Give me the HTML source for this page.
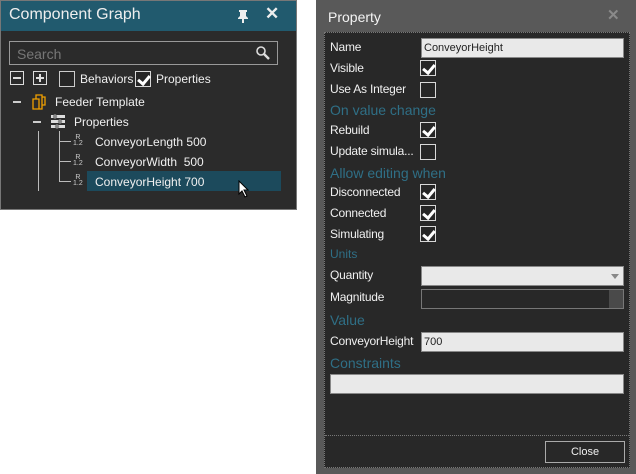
<!DOCTYPE html>
<html><head><meta charset="utf-8"><style>
*{box-sizing:border-box;margin:0;padding:0}
body{width:636px;height:474px;background:#fff;position:relative;overflow:hidden;font-family:"Liberation Sans",sans-serif;font-size:12px;color:#f0f0f0}
.a{position:absolute}
.cb{position:absolute;width:16px;height:16px;border:1px solid #d8d8d8;background:#262626}
.cb.on::after{content:"";position:absolute;left:4px;top:1px;width:5px;height:9px;border:solid #fff;border-width:0 3px 3px 0;transform:rotate(40deg)}
.lbl{position:absolute;left:330px;font-size:12px;color:#f0f0f0;letter-spacing:-0.2px}
.hd{position:absolute;left:330px;font-size:14px;color:#2f6f86}
.inp{position:absolute;background:#e9e9e9;border:1px solid #888;color:#222;font-size:11px;padding:3px 2px}
</style></head><body>
<div class="a" style="left:0;top:0;width:297px;height:210px;background:#2b2b2b;border:1px solid #777"></div>
<div class="a" style="left:1px;top:1px;width:295px;height:30px;background:#215a6e"></div>
<div class="a" style="left:9px;top:6px;font-size:16px;color:#eee">Component Graph</div>
<svg class="a" style="left:236px;top:9px" width="14" height="14"><path d="M3 1h8v2h-1v4l2 2v1H8v4H6v-4H2V9l2-2V3H3z" fill="#eee"/></svg>
<div class="a" style="left:265px;top:4px;font-size:17px;font-weight:bold;color:#eee">✕</div>
<div class="a" style="left:9px;top:41px;width:269px;height:24px;border:1px solid #999;background:#2b2b2b"></div>
<div class="a" style="left:17px;top:46px;font-size:14px;color:#777">Search</div>
<svg class="a" style="left:255px;top:45px" width="16" height="16"><circle cx="6" cy="6" r="4" stroke="#ddd" stroke-width="1.6" fill="none"/><path d="M9 9l5 5" stroke="#ddd" stroke-width="2.4"/></svg>
<div class="a" style="left:10px;top:71px;width:14px;height:14px;border:1px solid #ddd"></div><div class="a" style="left:13px;top:77px;width:8px;height:2px;background:#ddd"></div>
<div class="a" style="left:33px;top:71px;width:14px;height:14px;border:1px solid #ddd"></div><div class="a" style="left:36px;top:77px;width:8px;height:2px;background:#ddd"></div><div class="a" style="left:39px;top:74px;width:2px;height:8px;background:#ddd"></div>
<div class="cb" style="left:59px;top:71px;border-color:#ccc"></div>
<div class="a" style="left:80px;top:72px;font-size:12px">Behaviors</div>
<div class="cb on" style="left:135px;top:71px"></div>
<div class="a" style="left:156px;top:72px;font-size:12px">Properties</div>
<div class="a" style="left:13px;top:101px;width:8px;height:2px;background:#ccc"></div>
<svg class="a" style="left:32px;top:93px" width="14" height="17"><path d="M1 6h3V2h6v2h3v8h-3v4H1z M4 6h3v10 M10 4v8" stroke="#f0a000" stroke-width="1.3" fill="none"/></svg>
<div class="a" style="left:55px;top:95px">Feeder Template</div>
<div class="a" style="left:33px;top:121px;width:8px;height:2px;background:#ccc"></div>
<svg class="a" style="left:50px;top:113px" width="16" height="16"><rect x="1" y="2" width="14" height="3" fill="#ddd"/><rect x="1" y="7" width="14" height="3" fill="#ddd"/><rect x="1" y="12" width="14" height="3" fill="#ddd"/><circle cx="5" cy="3.5" r="2.2" fill="#888"/><circle cx="10" cy="8.5" r="2.2" fill="#888"/><circle cx="7" cy="13.5" r="2.2" fill="#888"/></svg>
<div class="a" style="left:74px;top:115px">Properties</div>
<div class="a" style="left:38px;top:131px;width:1px;height:60px;background:#bbb"></div>
<div class="a" style="left:59px;top:131px;width:1px;height:50px;background:#bbb"></div>
<div class="a" style="left:59px;top:141px;width:12px;height:1px;background:#bbb"></div>
<div class="a" style="left:59px;top:161px;width:12px;height:1px;background:#bbb"></div>
<div class="a" style="left:59px;top:181px;width:12px;height:1px;background:#bbb"></div>
<div class="a" style="left:87px;top:171px;width:194px;height:20px;background:#1c4a5c"></div>
<div class="a" style="left:73px;top:135px;font-size:7px;line-height:6px;color:#ccc;text-align:center">R<br>1.2</div>
<div class="a" style="left:73px;top:155px;font-size:7px;line-height:6px;color:#ccc;text-align:center">R<br>1.2</div>
<div class="a" style="left:73px;top:175px;font-size:7px;line-height:6px;color:#ccc;text-align:center">R<br>1.2</div>
<div class="a" style="left:95px;top:135px">ConveyorLength 500</div>
<div class="a" style="left:95px;top:155px">ConveyorWidth&nbsp; 500</div>
<div class="a" style="left:95px;top:175px">ConveyorHeight 700</div>
<svg class="a" style="left:238px;top:180px" width="12" height="18"><path d="M1 1v13l3-3 3 6 2-1-3-6h4z" fill="#fff" stroke="#000" stroke-width="1"/></svg>
<div class="a" style="left:316px;top:0;width:320px;height:474px;background:#595959"></div>
<div class="a" style="left:328px;top:9px;font-size:14px;color:#f4f4f4">Property</div>
<div class="a" style="left:607px;top:6px;font-size:15px;font-weight:bold;color:#8a8a8a">✕</div>
<div class="a" style="left:324px;top:32px;width:306px;height:436px;background:#282828;border:1px dotted #777"></div>
<div class="a" style="left:325px;top:435px;width:304px;height:1px;border-top:1px dotted #777"></div>
<div class="a" style="left:545px;top:441px;width:80px;height:22px;border:1px solid #aaa;text-align:center;line-height:20px;font-size:11px">Close</div>
<div class="lbl" style="top:40px">Name</div><div class="inp" style="left:421px;top:38px;width:203px;height:20px">ConveyorHeight</div>
<div class="lbl" style="top:61px">Visible</div><div class="cb on" style="left:420px;top:60px"></div>
<div class="lbl" style="top:82px">Use As Integer</div><div class="cb" style="left:420px;top:82px"></div>
<div class="hd" style="top:102px">On value change</div>
<div class="lbl" style="top:123px">Rebuild</div><div class="cb on" style="left:420px;top:122px"></div>
<div class="lbl" style="top:144px">Update simula...</div><div class="cb" style="left:420px;top:144px"></div>
<div class="hd" style="top:165px">Allow editing when</div>
<div class="lbl" style="top:185px">Disconnected</div><div class="cb on" style="left:420px;top:184px"></div>
<div class="lbl" style="top:206px">Connected</div><div class="cb on" style="left:420px;top:205px"></div>
<div class="lbl" style="top:227px">Simulating</div><div class="cb on" style="left:420px;top:226px"></div>
<div class="hd" style="top:247px;font-size:12px;color:#2f6f86">Units</div>
<div class="lbl" style="top:268px">Quantity</div><div class="inp" style="left:421px;top:266px;width:203px;height:20px"></div>
<div class="a" style="left:611px;top:274px;border:4px solid transparent;border-top:5px solid #888"></div>
<div class="lbl" style="top:290px">Magnitude</div><div class="a" style="left:421px;top:289px;width:203px;height:20px;border:1px solid #777;background:#282828"></div>
<div class="a" style="left:609px;top:290px;width:14px;height:18px;background:#4a4a4a"></div>
<div class="hd" style="top:312px">Value</div>
<div class="lbl" style="top:334px">ConveyorHeight</div><div class="inp" style="left:421px;top:332px;width:203px;height:20px">700</div>
<div class="hd" style="top:355px">Constraints</div>
<div class="inp" style="left:330px;top:374px;width:294px;height:20px"></div>
</body></html>
